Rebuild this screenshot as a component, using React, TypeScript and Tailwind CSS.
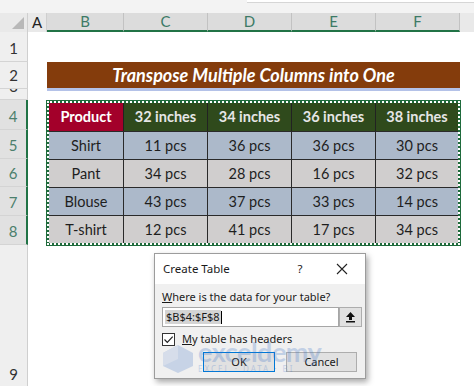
import React from "react";

const cols = ["B", "C", "D", "E", "F"];
const colW = ["w-[77px]", "w-[84px]", "w-[84px]", "w-[84px]", "w-[84px]"];

const rowLabels = [
  { n: "1", h: "h-[30px]", sel: false },
  { n: "2", h: "h-[27px]", sel: false },
  { n: "3", h: "h-[11px]", sel: false },
  { n: "4", h: "h-[30px]", sel: true },
  { n: "5", h: "h-[29px]", sel: true },
  { n: "6", h: "h-[28px]", sel: true },
  { n: "7", h: "h-[29px]", sel: true },
  { n: "8", h: "h-[29px]", sel: true },
];

const headers = ["32 inches", "34 inches", "36 inches", "38 inches"];
const data = [
  ["Shirt", "11 pcs", "36 pcs", "36 pcs", "30 pcs"],
  ["Pant", "34 pcs", "28 pcs", "16 pcs", "32 pcs"],
  ["Blouse", "43 pcs", "37 pcs", "33 pcs", "14 pcs"],
  ["T-shirt", "12 pcs", "41 pcs", "17 pcs", "34 pcs"],
];

function ProductTable() {
  return (
    <div className="ml-[18px] w-[415px] h-[146px] shrink-0 border border-[#1f6b3c] bg-[#1f6b3c]">
      <div className="border-2 border-dotted border-white bg-[#1f6b3c] h-full">
        <div className="grid grid-cols-[75px_84px_84px_84px_82px] grid-rows-[28px_28px_28px_28px_28px] h-full text-[14.5px]">
          <div className="bg-[#a3002a] text-white font-bold flex items-center justify-center border-r border-[#222]">
            Product
          </div>
          {headers.map((h, i) => (
            <div
              key={h}
              className={`bg-[#2f4a1c] text-[#e6e6e6] font-bold flex items-center justify-center ${i < 3 ? "border-r border-[#222]" : ""}`}
            >
              {h}
            </div>
          ))}
          {data.map((row, r) =>
            row.map((cell, c) => (
              <div
                key={r + "-" + c}
                className={`${r % 2 === 0 ? "bg-[#acb9ca]" : "bg-[#d0cece]"} text-[#1e1e1e] flex items-center justify-center border-t border-[#2a2a2a] ${c < 4 ? "border-r" : ""}`}
              >
                {cell}
              </div>
            ))
          )}
        </div>
      </div>
    </div>
  );
}

function CreateTableDialog() {
  return (
    <div
      className="absolute left-[154px] top-[253px] w-[212px] h-[126px] border border-[#9c9c9c] bg-[#f0f0f0] shadow-[2px_3px_6px_rgba(0,0,0,0.35)] text-[#1a1a1a]"
      style={{ fontFamily: '"Noto Sans", "Open Sans", sans-serif' }}
    >
      <div className="h-[30px] bg-white flex items-center pl-[8px] text-[11.5px]">
        <span className="flex-1">Create Table</span>
        <span className="w-[12px] text-center mr-[30px]">?</span>
        <svg width="12" height="12" viewBox="0 0 12 12" className="mr-[17px]">
          <path d="M1 1 L11 11 M11 1 L1 11" stroke="#222" strokeWidth="1.1" />
        </svg>
      </div>
      <div className="pl-[7px] pt-[4px] text-[11px]">
        <div className="h-[18px] leading-[18px]">
          <span className="underline">W</span>here is the data for your table?
        </div>
        <div className="flex h-[20px] mt-[1px]">
          <div className="w-[177px] bg-white border border-[#a6a6a6] flex items-center pl-[2px]">
            <span className="bg-[#d4d4d4] leading-[14px] px-[1px]">$B$4:$F$8</span>
            <span className="w-px h-[13px] bg-black"></span>
          </div>
          <div className="w-[23px] bg-[#e1e1e1] border border-[#adadad] flex items-center justify-center">
            <svg width="11" height="12" viewBox="0 0 11 12">
              <path d="M5.5 1 L10 6 L7 6 L7 9 L4 9 L4 6 L1 6 Z" fill="#111" />
              <rect x="1" y="10" width="9" height="1.5" fill="#111" />
            </svg>
          </div>
        </div>
        <div className="flex items-center h-[14px] mt-[5px]">
          <div className="w-[13px] h-[13px] border border-[#333] bg-white flex items-center justify-center">
            <svg width="11" height="11" viewBox="0 0 11 11">
              <path d="M1.5 5.5 L4.3 8.3 L9.7 2.7" stroke="#222" strokeWidth="1.2" fill="none" />
            </svg>
          </div>
          <span className="ml-[7px]">
            <span className="underline">M</span>y table has headers
          </span>
        </div>
        <div className="flex mt-[6px] h-[20px]">
          <div className="ml-[41px] w-[72px] border border-[#0078d7] bg-[#e1e1e1] flex items-center justify-center">
            OK
          </div>
          <div className="ml-[11px] w-[71px] border border-[#adadad] bg-[#e1e1e1] flex items-center justify-center">
            Cancel
          </div>
        </div>
      </div>
      {/* watermark */}
      <div className="absolute left-[6px] top-[86px] opacity-25 pointer-events-none flex items-end">
        <svg width="34" height="30" viewBox="0 0 34 30">
          <path d="M17 1 L32 9 L32 22 L17 29 L2 22 L2 9 Z" fill="#4f7fc9" />
          <path d="M17 1 L17 15 L2 22 L2 9 Z" fill="#8aa9dc" />
        </svg>
        <div className="ml-[3px] flex flex-col">
          <span
            className="text-[27px] font-bold leading-[24px] text-[#3a72c8] tracking-[-0.5px]"
            style={{ fontFamily: '"Lato", sans-serif' }}
          >
            exceldemy
          </span>
          <span className="text-[8px] text-[#3a72c8] tracking-[2px] leading-[10px]">EXCEL · DATA · BI</span>
        </div>
      </div>
    </div>
  );
}

export default function App() {
  return (
    <div
      className="relative w-[474px] h-[386px] overflow-hidden bg-white"
      style={{ fontFamily: '"Lato", "Open Sans", sans-serif' }}
    >
      {/* strip over the header */}
      <div className="h-[13px] bg-[#f3f3f3] flex">
        <div className="w-[247px]"></div>
        <div className="flex-1 h-[3px] bg-white border-b border-[#d6d6d6]"></div>
      </div>

      {/* column header row */}
      <div className="h-[19px] flex bg-[#e9e9e9] text-[15px] text-[#333]">
        <div className="w-[28px] shrink-0 border-r border-[#cfcfcf] relative">
          <svg width="12" height="12" viewBox="0 0 12 12" className="absolute right-[3px] bottom-[3px]">
            <path d="M12 0 L12 12 L0 12 Z" fill="#b8b8b8" />
          </svg>
        </div>
        <div className="w-[19px] shrink-0 border-r border-[#cfcfcf] flex items-center justify-center text-[#222]">A</div>
        {cols.map((c, i) => (
          <div
            key={c}
            className={`${colW[i]} shrink-0 bg-[#dcdcdc] border-r border-[#c2c2c2] border-b-2 border-b-[#217346] flex items-center justify-center text-[#3d7a66]`}
          >
            {c}
          </div>
        ))}
        <div className="flex-1"></div>
      </div>

      <div className="flex">
        {/* row header column */}
        <div className="w-[28px] shrink-0 flex flex-col text-[15px]">
          {rowLabels.map((r) => (
            <div
              key={r.n}
              className={`${r.h} border-b border-[#d4d4d4] flex items-end justify-center overflow-hidden leading-none pb-[5px] ${
                r.sel ? "bg-[#e1e1e1] text-[#4b7f6c] border-r-2 border-r-[#217346]" : "bg-[#efefef] text-[#333] border-r border-r-[#cfcfcf]"
              }`}
            >
              {r.n}
            </div>
          ))}
          <div className="h-[141px] bg-[#efefef] border-r border-[#cfcfcf] flex items-end justify-center pb-[1px] text-[#333]">
            9
          </div>
        </div>

        {/* sheet area */}
        <div className="flex-1 flex flex-col">
          <div className="h-[30px]"></div>
          <div className="ml-[19px] w-[413px] h-[26px] bg-[#843c0c] flex items-center justify-center">
            <span className="text-white font-bold italic text-[18px]">Transpose Multiple Columns into One</span>
          </div>
          <div className="ml-[19px] w-[413px] h-[3px] bg-[#b4c2e8]"></div>
          <div className="h-[9px]"></div>
          <ProductTable />
        </div>
      </div>

      <CreateTableDialog />
    </div>
  );
}
